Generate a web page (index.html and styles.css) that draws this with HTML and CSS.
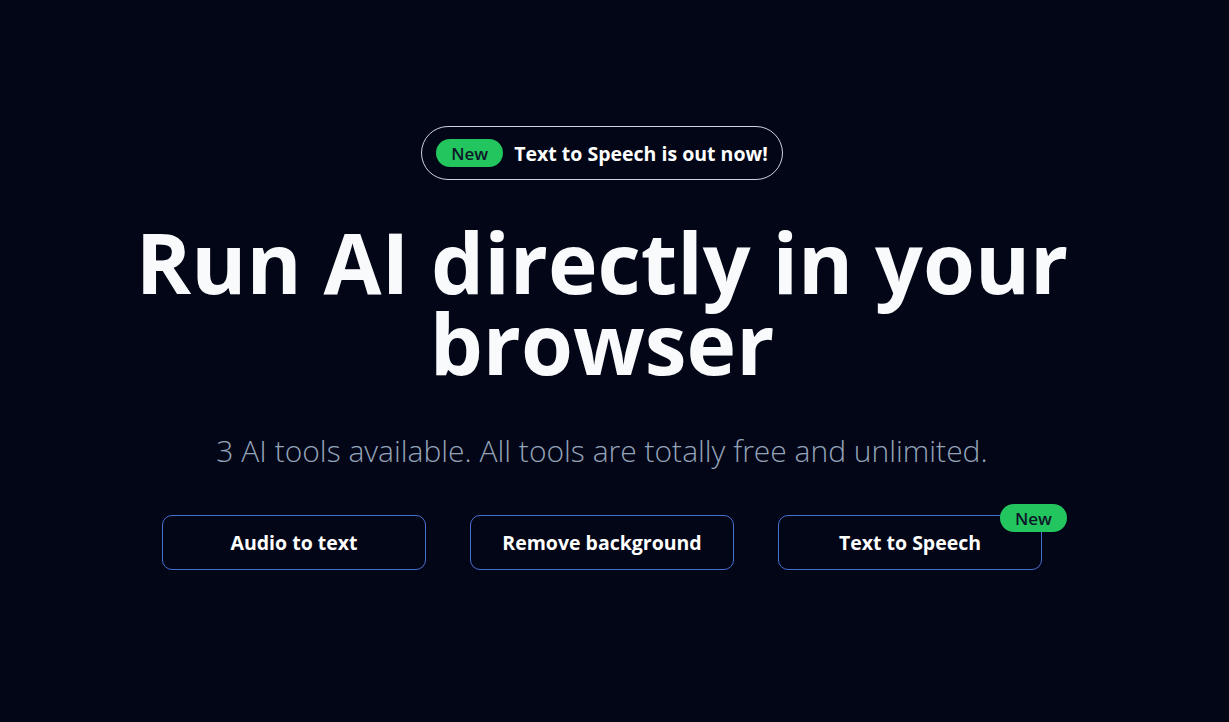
FILE: index.html
```html
<!DOCTYPE html>
<html lang="en">
  <head>
    <meta charset="UTF-8" />
    <meta name="viewport" content="width=device-width, initial-scale=1.0" />
    <title>Run AI directly in your browser</title>
    <link rel="stylesheet" href="styles.css">
  </head>
  <body>
    <main class="hero">
      <a class="announce" href="#">
        <span class="badge">New</span>
        <span class="announce-text">Text to Speech is out now!</span>
      </a>

      <h1 class="title">Run AI directly in your browser</h1>

      <p class="subtitle">3 AI tools available. All tools are totally free and unlimited.</p>

      <div class="tools">
        <a class="tool" href="#">Audio to text</a>
        <a class="tool" href="#">Remove background</a>
        <a class="tool" href="#">
          Text to Speech
          <span class="badge badge-corner">New</span>
        </a>
      </div>
    </main>
  </body>
</html>
```

FILE: styles.css
```css
body {
  font-family: "Open Sans", "Noto Sans", sans-serif;
  background-color: #020617;
  color: #f8fafc;
  margin: 0;
  padding: 0;
  height: 100vh;
  overflow: hidden;
}
.hero {
  display: flex;
  flex-direction: column;
  align-items: center;
  padding: 126px 25px 0 0;
}
.announce {
  display: flex;
  align-items: center;
  gap: 11px;
  height: 52px;
  padding: 0 14px;
  border: 1px solid #cbd5e1;
  border-radius: 999px;
  color: #ffffff;
  text-decoration: none;
}
.badge {
  display: inline-flex;
  align-items: center;
  justify-content: center;
  width: 67px;
  height: 28px;
  border-radius: 999px;
  background-color: #22c55e;
  color: #0f172a;
  font-size: 17px;
  font-weight: 600;
}
.announce-text {
  font-size: 19.5px;
  font-weight: 700;
}
.title {
  margin: 41px 0 0;
  max-width: 1000px;
  font-size: 84px;
  font-weight: 700;
  line-height: 81px;
  text-align: center;
}
.subtitle {
  margin: 47px 0 0;
  font-size: 30px;
  font-weight: 300;
  color: #94a3b8;
}
.tools {
  display: flex;
  gap: 44px;
  margin-top: 44px;
}
.tool {
  position: relative;
  display: flex;
  align-items: center;
  justify-content: center;
  width: 264px;
  height: 55px;
  box-sizing: border-box;
  border: 1px solid #4670d0;
  border-radius: 10px;
  color: #ffffff;
  font-size: 19.5px;
  font-weight: 700;
  text-decoration: none;
}
.badge-corner {
  position: absolute;
  top: -12px;
  right: -26px;
}
```
